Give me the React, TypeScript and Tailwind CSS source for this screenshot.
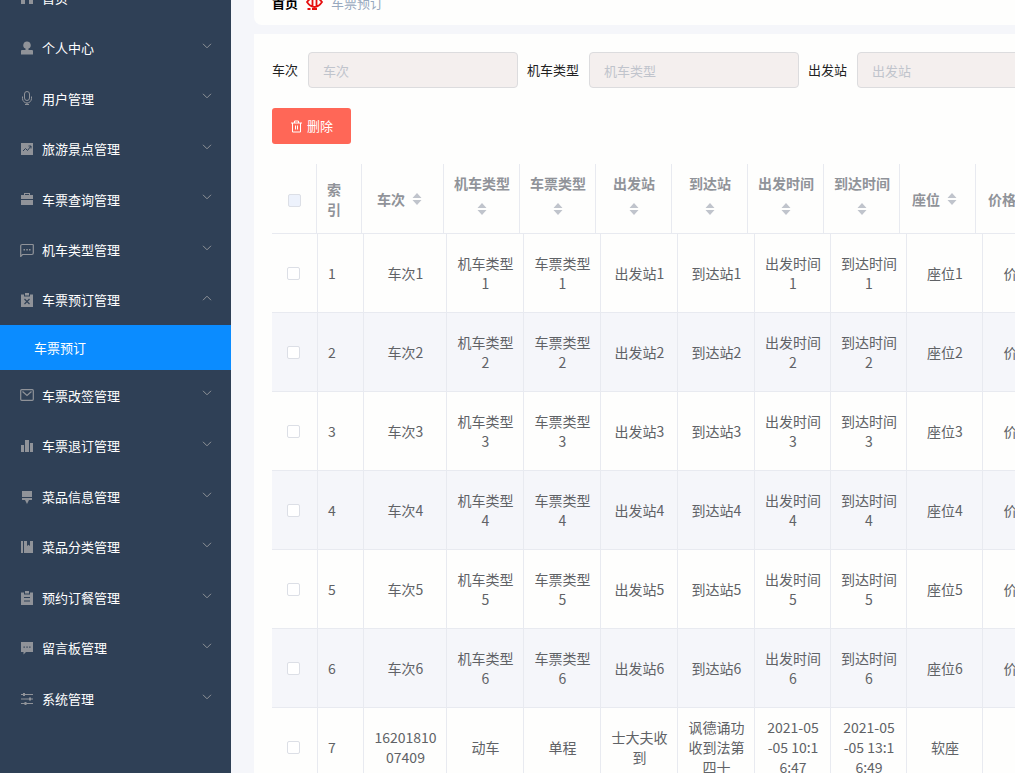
import type { ReactNode } from "react";
import clsx from "clsx";

interface MenuEntry {
  label: string;
  icon: ReactNode;
  children?: string[];
  leaf?: boolean;
}

const menu: MenuEntry[] = [
  { label: "首页", leaf: true, icon: <path d="M7 1 1 6v8h4v-4h4v4h4V6z" /> },
  {
    label: "个人中心",
    icon: <path d="M7 .5a3.700 3.700 0 0 1 1.500 7.100V9H12a1 1 0 0 1 1 1v3.500H1V10a1 1 0 0 1 1-1h3.500V7.600A3.700 3.700 0 0 1 7 .5z" />,
  },
  {
    label: "用户管理",
    icon: (
      <g fill="none" stroke="currentColor">
        <rect x="4.500" y=".5" width="5" height="9" rx="2.500" />
        <path d="M2.500 5.500v2a4.500 4.500 0 0 0 9 0v-2M7 12v2M5 13.500h4" />
      </g>
    ),
  },
  {
    label: "旅游景点管理",
    icon: (
      <>
        <path d="M1 1h12v12H1z" />
        <path d="m3 9 2.500-2.500 2 2L11 4M8.500 4H11v2.500" fill="none" stroke="#2f4056" />
      </>
    ),
  },
  {
    label: "车票查询管理",
    icon: <path d="M4 3V1h6v2h3v4H1V3zm1 0h4V2H5zM1 8h12v5H1z" />,
  },
  {
    label: "机车类型管理",
    icon: (
      <>
        <path d="M.7 13.500V3a1.500 1.500 0 0 1 1.500-1.500h10.500a.6.6 0 0 1 .6.6V10a1.500 1.500 0 0 1-1.500 1.500H2.500z" fill="none" stroke="currentColor" strokeWidth="1.200" />
        <path d="M3.500 6H5v1.500H3.500zM6.300 6h1.500v1.500H6.300zM9 6h1.500v1.500H9z" />
      </>
    ),
  },
  {
    label: "车票预订管理",
    children: ["车票预订"],
    icon: (
      <>
        <path d="M1 1.500h3v2h6v-2h3V14H1zM5 0h4v2.500H5z" />
        <path d="m4.500 6 5 5m0-5-5 5" fill="none" stroke="#2f4056" strokeWidth="1.200" />
      </>
    ),
  },
  {
    label: "车票改签管理",
    icon: (
      <g fill="none" stroke="currentColor" strokeWidth="1.200">
        <rect x=".7" y="1.700" width="12.600" height="10.600" rx="1" />
        <path d="M2.500 3.500 7 7.500l4.500-4" />
      </g>
    ),
  },
  { label: "车票退订管理", icon: <path d="M1 6h3v7H1zM5 1h4v12H5zM10 4h3v9h-3z" /> },
  { label: "菜品信息管理", icon: <path d="M2 1h10v6H2zM2 8h10v1.500a.5.5 0 0 1-.5.5H9l-2 4-2-4H2.500a.5.5 0 0 1-.5-.5z" /> },
  { label: "菜品分类管理", icon: <path d="M1 1h2v12H1zM4 1h3v5l1.500-1.200L10 6V1h3v12H4z" /> },
  {
    label: "预约订餐管理",
    icon: (
      <>
        <path d="M1 1.500h3v2h6v-2h3V14H1zM5 0h4v2.500H5z" />
        <path d="M4 6.500h6M4 10h6" fill="none" stroke="#2f4056" />
      </>
    ),
  },
  {
    label: "留言板管理",
    icon: (
      <>
        <path d="M1 1h12v10H6l-2.500 2.500V11H1z" />
        <path d="M3.500 5.500h1.300v1.300H3.500zM6.400 5.500h1.300v1.300H6.400zM9.200 5.500h1.300v1.300H9.200z" fill="#2f4056" />
      </>
    ),
  },
  {
    label: "系统管理",
    icon: (
      <>
        <path d="M1 2.500h12M1 7h12M1 11.500h12" stroke="currentColor" />
        <path d="M3 1h2v3H3zM9 5.500h2v3H9zM4.500 10h2v3h-2z" />
      </>
    ),
  },
];

const filters = [
  { id: "checi", label: "车次" },
  { id: "leixing", label: "机车类型" },
  { id: "chufazhan", label: "出发站" },
];

const columns = ["车次", "机车类型", "车票类型", "出发站", "到达站", "出发时间", "到达时间", "座位", "价格"];

const rows: string[][] = [
  ...[1, 2, 3, 4, 5, 6].map((n) => columns.map((name) => `${name}${n}`)),
  [
    "1620181007409",
    "动车",
    "单程",
    "士大夫收到",
    "讽德诵功收到法第四十",
    "2021-05-05 10:16:47",
    "2021-05-05 13:16:49",
    "软座",
    "",
  ],
];

function Chevron({ open }: { open?: boolean }) {
  return (
    <svg width="10" height="6" viewBox="0 0 10 6" className={clsx("mb-1 text-[#909399]", open && "rotate-180")}>
      <path d="m1 .8 4 4 4-4" fill="none" stroke="currentColor" />
    </svg>
  );
}

function Sidebar() {
  return (
    <aside className="w-[231px] shrink-0 bg-[#2f4056] text-[13px] text-white">
      <ul className="-mt-7 flex min-h-[752px] flex-col">
        {menu.map((item) => (
          <li key={item.label} className={clsx("flex flex-col", item.children ? "grow-0" : "grow")}>
            <button
              type="button"
              aria-expanded={item.leaf ? undefined : Boolean(item.children)}
              className="flex min-h-[50px] grow items-center pr-[19px] pl-5 text-left"
            >
              <svg width="14" height="14" viewBox="0 0 14 14" fill="currentColor" className="mr-2 text-[#909399]">
                {item.icon}
              </svg>
              <span className="flex-1">{item.label}</span>
              {!item.leaf && <Chevron open={Boolean(item.children)} />}
            </button>
            {item.children?.map((child) => (
              <a key={child} href="#" className="flex h-[45px] items-center bg-[#0b8cff] pl-[34px]">
                {child}
              </a>
            ))}
          </li>
        ))}
      </ul>
    </aside>
  );
}

function SortCaret() {
  return (
    <span className="flex h-8 w-6 items-center justify-center">
      <svg width="10" height="12" viewBox="0 0 10 12" fill="#c0c4cc">
        <path d="M5 0 9.500 5h-9zM5 12 .5 7h9z" />
      </svg>
    </span>
  );
}

function Columns({ widths }: { widths: number[] }) {
  return (
    <colgroup>
      {widths.map((width, i) => (
        <col key={i} style={{ width }} />
      ))}
    </colgroup>
  );
}

function Checkbox({ label, muted }: { label: string; muted?: boolean }) {
  return (
    <input
      type="checkbox"
      aria-label={label}
      className={clsx(
        "block size-[13px] appearance-none rounded-xs border border-[#dcdfe6]",
        muted ? "bg-[#edf2fc]" : "bg-white"
      )}
    />
  );
}

const border = "border-r border-b border-[#e8eaf0]";
const cell = `${border} pr-[9px] pl-[10px] break-all`;

function TicketTable() {
  return (
    <div className="mt-5 overflow-hidden text-sm leading-5">
      <table className="w-[780px] table-fixed border-separate border-spacing-0 text-[#909399]">
        <Columns widths={[45, 45, 82, 76, 76, 76, 76, 76, 76, 76, 76]} />
        <thead>
          <tr>
            <th className={clsx(border, "pt-1 pl-4")}>
              <Checkbox label="全选" muted />
            </th>
            <th className={clsx(cell, "text-left font-bold")}>索引</th>
            {columns.map((name) => (
              <th key={name} className={clsx(cell, "pt-[9px] pb-2 font-bold")}>
                <span className="flex flex-wrap items-center justify-center">
                  {name}
                  <SortCaret />
                </span>
              </th>
            ))}
          </tr>
        </thead>
      </table>
      <table className="w-[788px] table-fixed border-separate border-spacing-0 text-[#606266]">
        <Columns widths={[46, 46, 83, 77, 77, 77, 77, 76, 76, 76, 77]} />
        <tbody>
          {rows.map((row, i) => (
            <tr key={i} className={clsx("h-[79px]", i % 2 === 1 && "bg-[#f5f6fa]")}>
              <td className={clsx(border, "pl-[15px]")}>
                <Checkbox label={`选择第${i + 1}行`} />
              </td>
              <td className={cell}>{i + 1}</td>
              {row.map((value, j) => (
                <td key={columns[j]} className={clsx(cell, "text-center")}>
                  {value}
                </td>
              ))}
            </tr>
          ))}
        </tbody>
      </table>
    </div>
  );
}

export default function App() {
  return (
    <div className="flex h-screen overflow-hidden bg-[#f5f6fa] font-['Noto_Sans_CJK_SC',sans-serif]">
      <Sidebar />
      <main className="flex min-w-0 flex-1 flex-col gap-[9px] pl-[23px]">
        <nav className="-mt-7 flex h-[53px] shrink-0 items-center gap-2 rounded-bl-lg bg-[#fefefd] px-[18px] pt-2 text-[13px] leading-5">
          <a href="#" className="font-bold text-black">
            首页
          </a>
          <svg width="17" height="14" viewBox="0 0 17 14" fill="none" stroke="#e60f0f" strokeWidth="1.800">
            <path d="M8.500 1C5 1 3 3.500 1 6c2 3 3.500 5 7.500 5S14 9 16 6c-2-2.500-4-5-7.500-5zM6.500 1.500v9M10.500 1.500v9M1.500 13h3M6 13h5" />
          </svg>
          <span className="text-[#97a8be]">车票预订</span>
        </nav>
        <section className="min-h-0 flex-1 overflow-hidden bg-[#fefefd] pt-[18px] pl-[18px]">
          <form className="flex gap-[9px] text-[13px] text-[#222]">
            {filters.map(({ id, label }) => (
              <div key={id} className="flex shrink-0 items-center gap-[10px]">
                <label htmlFor={id}>{label}</label>
                <input
                  id={id}
                  placeholder={label}
                  className="h-9 w-[210px] rounded-sm border border-[#dcdcde] bg-[#f4efee] px-[14px] outline-none placeholder:text-[#c0c4cc]"
                />
              </div>
            ))}
          </form>
          <button
            type="button"
            className="mt-5 flex h-9 items-center gap-1 rounded-[3px] bg-[#ff6757] px-[18px] text-[13px] text-white"
          >
            <svg width="13" height="13" viewBox="0 0 13 13" fill="none" stroke="currentColor">
              <path d="M1 3h11M4.500 3V1h4v2M2.500 3v9h8V3M5.500 5.500v4M7.500 5.500v4" />
            </svg>
            删除
          </button>
          <TicketTable />
        </section>
      </main>
    </div>
  );
}
